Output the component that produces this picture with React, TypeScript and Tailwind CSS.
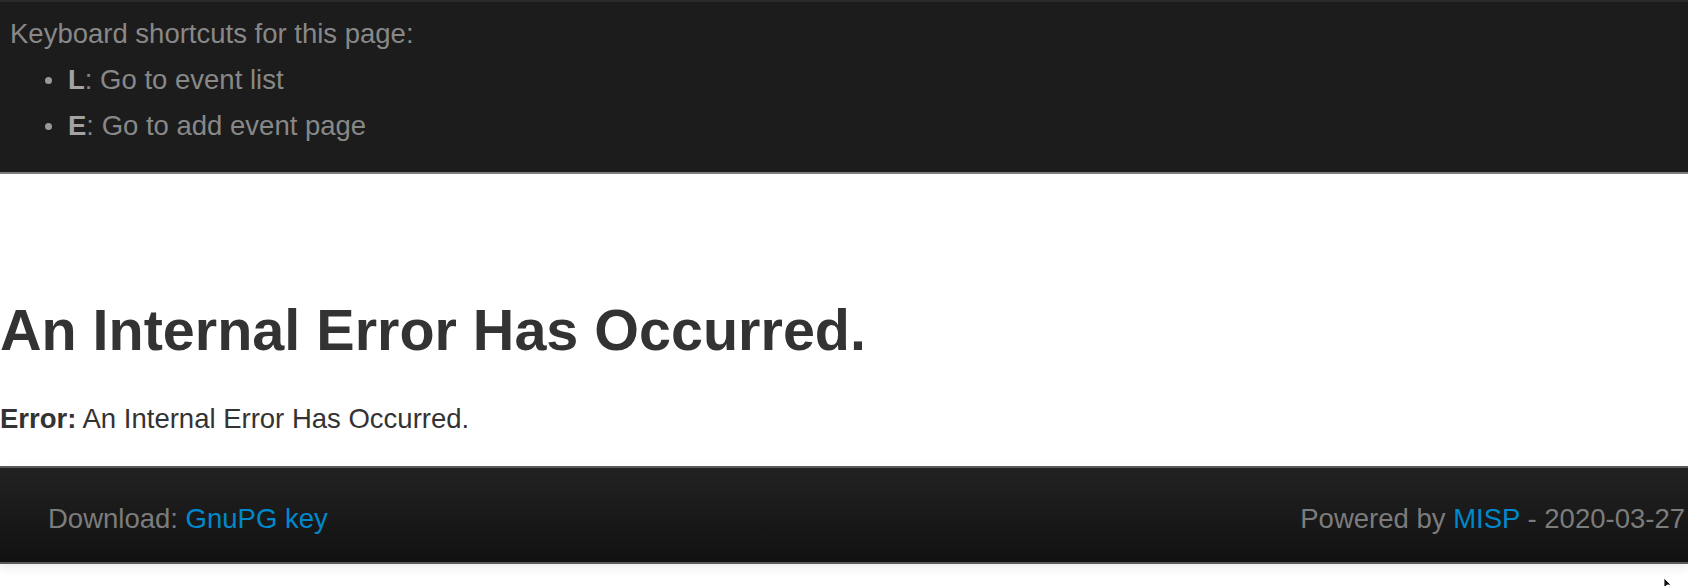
const shortcuts = [
  { key: "L", label: "Go to event list" },
  { key: "E", label: "Go to add event page" },
];

export default function App() {
  return (
    <div className="relative w-[1688px] h-[586px] overflow-hidden bg-white font-['Liberation_Sans',Arial,sans-serif] text-[27.5px] leading-[46px]">
      {/* shortcuts bar */}
      <div className="bg-[#1c1c1c] border-t-2 border-[#2a2a2a] border-b-2 border-b-[#7d7d7d] h-[174px] pl-[10px] pt-[9px] text-[#888]">
        <div>Keyboard shortcuts for this page:</div>
        <ul>
          {shortcuts.map((s) => (
            <li key={s.key} className="flex items-center">
              <span className="ml-[35px] w-[7px] h-[7px] rounded-full bg-[#999]" />
              <span className="ml-[16px]">
                <b className="text-[#a3a3a3]">{s.key}</b>: {s.label}
              </span>
            </li>
          ))}
        </ul>
      </div>

      {/* error content */}
      <h2 className="mt-[123px] text-[57.5px] leading-[66px] font-bold text-[#333]">
        An Internal Error Has Occurred.
      </h2>
      <p className="mt-[33px] text-[#333]">
        <strong>Error:</strong> An Internal Error Has Occurred.
      </p>

      {/* footer */}
      <div className="mt-[24px] h-[98px] flex justify-between border-y-2 border-[#5a5a5a] bg-gradient-to-b from-[#222] to-[#111] pl-[48px] pr-[3px] pt-[28px] text-[#7c7c7c] shadow-[0_4px_10px_rgba(0,0,0,0.08)]">
        <div>
          Download: <a className="text-[#0088cc]">GnuPG key</a>
        </div>
        <div>
          Powered by <a className="text-[#0088cc]">MISP</a> - 2020-03-27
        </div>
      </div>

      {/* mouse pointer tip */}
      <svg className="absolute left-[1663px] top-[578px]" width="10" height="10" viewBox="0 0 10 10">
        <path d="M1 0 L1 10 L4 7 L8 7 Z" fill="#111" stroke="#fff" strokeWidth="0.8" />
      </svg>
    </div>
  );
}
